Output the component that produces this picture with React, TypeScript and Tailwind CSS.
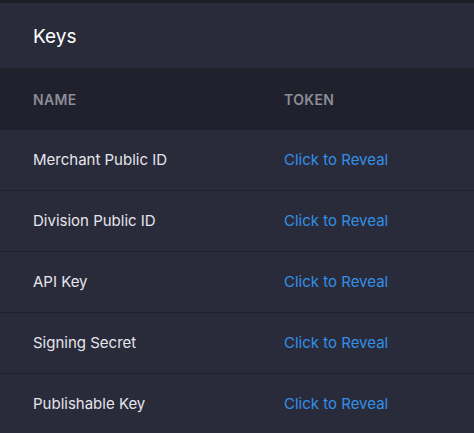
import * as React from 'react'

const KEYS = [
  'Merchant Public ID',
  'Division Public ID',
  'API Key',
  'Signing Secret',
  'Publishable Key',
]

const KeyRow: React.FC<{name: string}> = ({name}) => (
  <div className="grid h-[61px] grid-cols-[251px_1fr] items-center border-b border-[#1f2029] bg-[#2a2b3a] px-[33px]">
    <span className="text-[15px] text-[#e4e5ec]">{name}</span>
    <button className="w-fit cursor-pointer text-left text-[15px] text-[#3290e8]">
      Click to Reveal
    </button>
  </div>
)

export default function App() {
  return (
    <div className="min-h-[433px] w-full overflow-hidden bg-[#2a2b3a] font-['Inter',sans-serif] antialiased">
      <div className="h-[3px] bg-[#1c1d26]" />
      <div className="flex h-[65px] items-center px-[33px] pt-[3px]">
        <h2 className="text-[19px] text-white">Keys</h2>
      </div>
      <div className="grid h-[62px] grid-cols-[251px_1fr] items-center bg-[#20212c] px-[33px] text-[14px] font-semibold tracking-wide text-[#8b8d99]">
        <span>NAME</span>
        <span>TOKEN</span>
      </div>
      {KEYS.map(k => (
        <KeyRow key={k} name={k} />
      ))}
    </div>
  )
}
